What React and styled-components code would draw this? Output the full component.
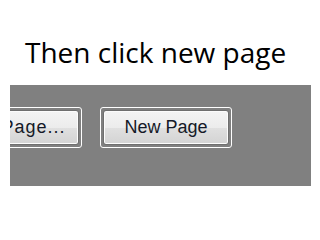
import React from 'react';
import styled, { createGlobalStyle } from 'styled-components';

const GlobalStyle = createGlobalStyle`
	body {
		margin: 0;
		background: #ffffff;
	}
`;

const Page = styled.div`
	width: 320px;
	height: 240px;
	overflow: hidden;
	background: #ffffff;
`;

const Heading = styled.h1`
	margin: 0;
	padding: 33px 0 0 25px;
	font-family: "Open Sans", "Liberation Sans", sans-serif;
	font-weight: 400;
	font-size: 28px;
	line-height: 38px;
	color: #000000;
`;

const Panel = styled.div`
	margin: 14px 0 0 10px;
	width: 301px;
	height: 101px;
	background: #808080;
	display: flex;
	align-items: flex-start;
	gap: 18px;
	padding-top: 22px;
	box-sizing: border-box;
	overflow: hidden;
`;

const Frame = styled.div`
	flex: none;
	border: 1px solid #ffffff;
	border-radius: 3px;
	padding: 2px;
	margin-left: ${p => p.$offset || 0}px;
`;

const Button = styled.button`
	display: flex;
	align-items: center;
	justify-content: center;
	width: ${p => p.$width}px;
	height: 35px;
	box-sizing: border-box;
	border: 1px solid #6f6f6f;
	border-radius: 3px;
	padding: 0;
	background: linear-gradient(#f4f4f4 0%, #ececec 50%, #e0e0e0 51%, #d3d3d3 100%);
	box-shadow: inset 0 0 0 1px #fcfcfc;
	font-family: "Liberation Sans", Arial, sans-serif;
	font-size: 18px;
	letter-spacing: ${p => p.$spacing || 0}px;
	color: #151a28;
	white-space: nowrap;
`;

export default function App() {
	return (
		<Page>
			<GlobalStyle />
			<Heading>Then click new page</Heading>
			<Panel>
				<Frame $offset={-25}>
					<Button $width={91} $spacing={1}>Page...</Button>
				</Frame>
				<Frame>
					<Button $width={126}>New Page</Button>
				</Frame>
			</Panel>
		</Page>
	);
}
